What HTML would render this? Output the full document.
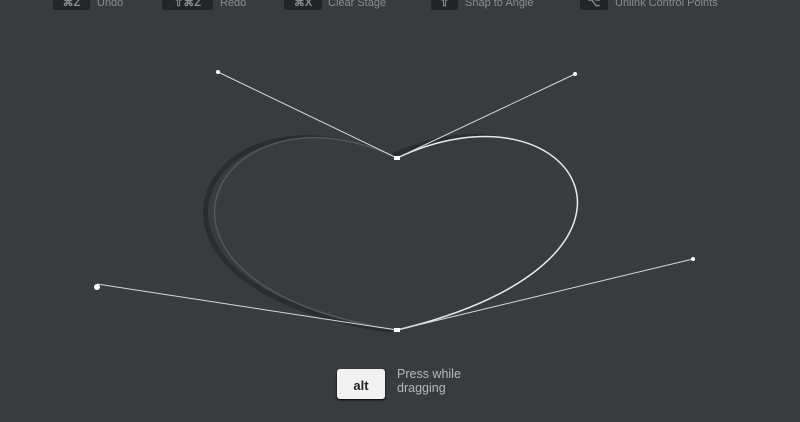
<!DOCTYPE html>
<html><head><style>
body{margin:0;width:800px;height:422px;background:#393c3f;overflow:hidden;font-family:"Liberation Sans",sans-serif;position:relative}
.k{position:absolute;top:-2px;height:12px;background:#232527;border-radius:2px;color:#8a8d90;font-size:11px;line-height:10px;text-align:center;font-weight:bold}
.t{position:absolute;top:-3px;color:#8a8d90;font-size:11px}
.alt{position:absolute;left:337px;top:369px;width:48px;height:30px;background:#f2f2f2;border-radius:3px;box-shadow:0 1px 2px #000;font-size:13px;color:#222;text-align:center;line-height:34px;font-weight:bold}
.p{position:absolute;left:397px;top:367px;color:#b5b7b9;font-size:12.5px;line-height:14px}
</style></head><body>
<div class="k" style="left:53px;width:37px">⌘Z</div><div class="t" style="left:97px">Undo</div>
<div class="k" style="left:162px;width:51px">⇧⌘Z</div><div class="t" style="left:220px">Redo</div>
<div class="k" style="left:284px;width:38px">⌘X</div><div class="t" style="left:328px">Clear Stage</div>
<div class="k" style="left:431px;width:27px">⇧</div><div class="t" style="left:465px">Snap to Angle</div>
<div class="k" style="left:580px;width:28px">⌥</div><div class="t" style="left:615px">Unlink Control Points</div>
<svg width="800" height="422" style="position:absolute;left:0;top:0">
<path d="M393,160 C570,76 688,261 393,332 C93,286 214,74 393,160Z" fill="none" stroke="#2a2c2e" stroke-width="5" transform="translate(-5,-2)"/>
<path d="M397,158 C575,74 693,259 397,330 C97,284 218,72 397,158Z" fill="#393c3f" stroke="#54575a" stroke-width="1.5"/>
<path d="M397,158 C575,74 693,259 397,330" fill="none" stroke="#e8e8e8" stroke-width="1.5"/>
<g stroke="#d8d8d8" stroke-width="1">
<line x1="397" y1="158" x2="218" y2="72"/><line x1="397" y1="158" x2="575" y2="74"/>
<line x1="397" y1="330" x2="97" y2="284"/><line x1="397" y1="330" x2="693" y2="259"/>
</g>
<g fill="#fff"><circle cx="218" cy="72" r="2"/><circle cx="575" cy="74" r="2"/><circle cx="693" cy="259" r="2"/><circle cx="97" cy="287" r="3"/>
<rect x="394" y="156" width="6" height="4"/><rect x="394" y="328" width="6" height="4"/></g>
</svg>
<div class="alt">alt</div>
<div class="p">Press while<br>dragging</div>
</body></html>
